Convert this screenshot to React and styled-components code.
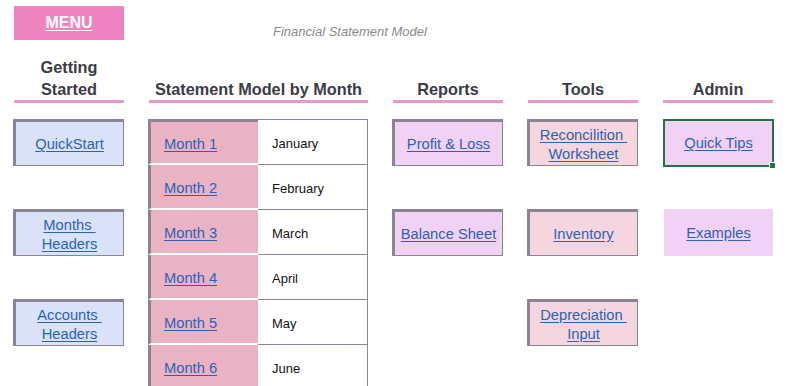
import React from "react";
import styled, { createGlobalStyle } from "styled-components";

const GlobalStyle = createGlobalStyle`
html, body {
  margin: 0;
  padding: 0;
  background: #fff;
  overflow: hidden;
  font-family: "Liberation Sans", Arial, sans-serif;
}
`;

const Page = styled.div`
padding: 6px 0 0 13px;
width: 790px;
height: 386px;
box-sizing: border-box;
overflow: hidden;
`;

const TopBar = styled.div`
display: flex;
align-items: flex-start;
`;

const MenuButton = styled.a`
display: flex;
align-items: center;
justify-content: center;
width: 110px;
height: 34px;
margin-left: 1px;
background: #ef83bf;
color: #fff;
font-weight: bold;
font-size: 16px;
text-decoration: underline;
text-underline-offset: 2px;
`;

const Title = styled.div`
margin: 18px 0 0 149px;
font-size: 13px;
font-style: italic;
color: #8a8a8a;
`;

const Board = styled.div`
display: grid;
grid-template-columns: 111px 220px 111px 111px 111px;
column-gap: 24px;
margin-top: 16px;
`;

const Column = styled.div`
display: flex;
flex-direction: column;
`;

const Heading = styled.div`
height: 44px;
display: flex;
align-items: flex-end;
justify-content: center;
text-align: center;
white-space: pre-line;
border-bottom: 3px solid #e39acb;
font-size: 16.3px;
font-weight: bold;
line-height: 22px;
color: #3b3b47;
margin-left: 1px;
`;

const Stack = styled.div`
display: flex;
flex-direction: column;
gap: 43px;
margin-top: 16px;
`;

const Tile = styled.div`
position: relative;
height: 47px;
box-sizing: border-box;
display: flex;
align-items: center;
justify-content: center;
text-align: center;
padding-top: 2px;
background: ${(props) => props.bg};
border-style: solid;
border-color: #8c8396;
border-width: ${(props) => (props.plain ? "0" : "3px 1px 1px 3px")};
font-size: 14.7px;
line-height: 19px;
margin-left: ${(props) => (props.plain ? "2px" : "0")};
`;

const Selection = styled.div`
position: absolute;
inset: 0 -1px -1px -1px;
border: 2px solid #217346;
pointer-events: none;

&::after {
  content: "";
  position: absolute;
  right: -4px;
  bottom: -4px;
  width: 5px;
  height: 5px;
  background: #217346;
  border: 1px solid #fff;
}
`;

const Link = styled.a`
color: #2c62b5;
text-decoration: underline;
text-underline-offset: 2px;
white-space: pre;
`;

const MonthTable = styled.div`
display: grid;
grid-template-columns: 110px 110px;
grid-template-rows: 46px;
grid-auto-rows: 45px;
margin-top: 16px;
`;

const MonthCell = styled.div`
display: flex;
align-items: center;
box-sizing: border-box;
padding: 2px 0 0 13px;
background: #e9b3c4;
border-left: 3px solid #8c8396;
border-top: ${(props) => (props.first ? "3px solid #8c8396" : "0")};
border-bottom: 2px solid #fff;
font-size: 14.7px;
`;

const NameCell = styled.div`
display: flex;
align-items: center;
box-sizing: border-box;
padding: 2px 0 0 14px;
background: #fff;
border-right: 1px solid #8c8396;
border-bottom: 1px solid #8c8396;
border-top: ${(props) => (props.first ? "1px solid #8c8396" : "0")};
font-size: 13px;
color: #111;
`;

const MonthRow = styled.div`
display: contents;
`;

const months = ["January", "February", "March", "April", "May", "June"];

const blue = "#d9e2f8";
const lilac = "#f2d2f4";
const rose = "#f6d6de";

const columns = [
  {
    title: "Getting\nStarted",
    tiles: [
      { label: "QuickStart", bg: blue },
      { label: "Months \nHeaders", bg: blue },
      { label: "Accounts \nHeaders", bg: blue },
    ],
  },
  null,
  {
    title: "Reports",
    tiles: [
      { label: "Profit & Loss", bg: lilac },
      { label: "Balance Sheet", bg: lilac },
    ],
  },
  {
    title: "Tools",
    tiles: [
      { label: "Reconcilition \nWorksheet", bg: rose },
      { label: "Inventory", bg: rose },
      { label: "Depreciation \nInput", bg: rose },
    ],
  },
  {
    title: "Admin",
    tiles: [
      { label: "Quick Tips", bg: lilac, plain: true, selected: true },
      { label: "Examples", bg: lilac, plain: true },
    ],
  },
];

const App = () => {
  return (
    <Page>
      <GlobalStyle />
      <TopBar>
        <MenuButton>MENU</MenuButton>
        <Title>Financial Statement Model</Title>
      </TopBar>
      <Board>
        {columns.map((col, i) =>
          col ? (
            <Column key={i}>
              <Heading>{col.title}</Heading>
              <Stack>
                {col.tiles.map((t) => (
                  <Tile key={t.label} bg={t.bg} plain={t.plain}>
                    <Link>{t.label}</Link>
                    {t.selected && <Selection />}
                  </Tile>
                ))}
              </Stack>
            </Column>
          ) : (
            <Column key={i}>
              <Heading>Statement Model by Month</Heading>
              <MonthTable>
                {months.map((m, n) => (
                  <MonthRow key={m}>
                    <MonthCell first={n === 0}>
                      <Link>Month {n + 1}</Link>
                    </MonthCell>
                    <NameCell first={n === 0}>{m}</NameCell>
                  </MonthRow>
                ))}
              </MonthTable>
            </Column>
          )
        )}
      </Board>
    </Page>
  );
};

export default App;
